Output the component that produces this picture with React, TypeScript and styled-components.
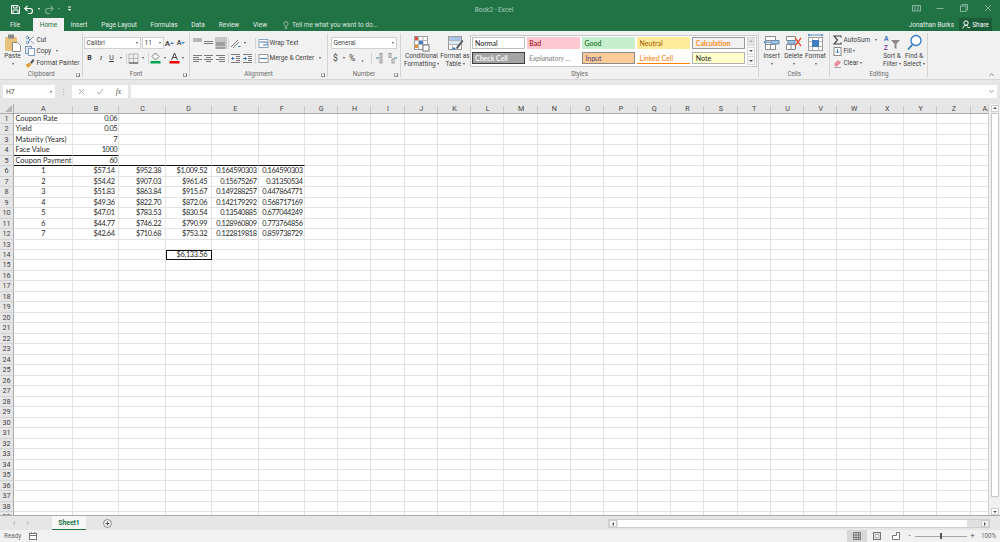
import React, { FC, ReactNode } from 'react'
import styled, { createGlobalStyle } from 'styled-components'
import { ChevronDown, ChevronUp, Lightbulb, Scissors } from 'lucide-react'

const GREEN = '#217346'
const UI_FONT = 'Roboto, "Open Sans", sans-serif'

const GlobalStyle = createGlobalStyle`
  html, body { margin: 0; padding: 0; background: #e6e6e6; overflow: hidden; }
  * { box-sizing: border-box; }
`

/* small drawing helpers */
const Ico: FC<{ w?: number; h?: number; children: ReactNode }> = ({ w = 11, h = 11, children }) => (
  <svg width={w} height={h} viewBox={`0 0 ${w} ${h}`} fill='none'>
    {children}
  </svg>
)

const BLUE = '#3f7cc0'
const GR = '#7a7a7a'
const DK = '#444'

const AlignLines: FC<{ kind: 'left' | 'center' | 'right' | 'top' | 'mid' | 'bottom' }> = ({ kind }) => {
  if (kind === 'top' || kind === 'mid' || kind === 'bottom') {
    const y = kind === 'top' ? 1 : kind === 'mid' ? 3.5 : 5
    return (
      <Ico>
        <path d={`M1 ${y}h9M1 ${y + 2}h9`} stroke={GR} />
        <path d={kind === 'bottom' ? 'M1 10h9' : 'M1 0.5h0'} stroke={GR} />
      </Ico>
    )
  }
  const l = kind === 'left' ? [1, 1, 1, 1] : kind === 'center' ? [1, 3, 1, 3] : [1, 4, 1, 4]
  const r = kind === 'left' ? [10, 7, 10, 7] : kind === 'center' ? [10, 8, 10, 8] : [10, 10, 10, 10]
  return (
    <Ico>
      {l.map((x, i) => (
        <path key={i} d={`M${x} ${2.5 + i * 2}H${r[i]}`} stroke={GR} />
      ))}
    </Ico>
  )
}

const IndentIcon: FC<{ flip?: boolean }> = ({ flip }) => (
  <Ico>
    <path d='M1 1.5h9M6 3.5h4M6 5.5h4M6 7.5h4M1 9.5h9' stroke={GR} />
    <path d={flip ? 'M1 5.5h3M3 4l1.5 1.5L3 7' : 'M4.5 5.5h-3M3 4L1.5 5.5 3 7'} stroke={BLUE} />
  </Ico>
)

const BigGridIcon: FC<{ children?: ReactNode }> = ({ children }) => (
  <Ico w={17} h={18}>
    <rect x='1.5' y='2.5' width='13' height='13' fill='#fff' stroke='#9a9a9a' />
    <path d='M1.5 6.5h13M1.5 10.5h13M5.5 2.5v13M10 2.5v13' stroke='#b5b5b5' />
    {children}
  </Ico>
)

/* title bar */
const TitleBar = styled.div`
  height: 18px;
  background: ${GREEN};
  display: flex;
  align-items: center;
  position: relative;
  font-family: ${UI_FONT};
`

const Qat = styled.div`
  display: flex;
  align-items: center;
  padding-left: 9px;
  width: 440px;
`

const QatSlot = styled.span<{ $w: number; $dim?: boolean }>`
  width: ${p => p.$w}px;
  display: inline-flex;
  justify-content: center;
  align-items: center;
  opacity: ${p => (p.$dim ? 0.4 : 1)};
`

const MiniCaret = styled.span<{ $color?: string }>`
  display: inline-block;
  width: 0;
  height: 0;
  border-left: 1.7px solid transparent;
  border-right: 1.7px solid transparent;
  border-top: 2px solid ${p => p.$color || '#555'};
`

const DocTitle = styled.div`
  width: 108px;
  padding-top: 1.5px;
  text-align: center;
  font-size: 6.5px;
  color: #a9cbb8;
`

const WindowButtons = styled.div`
  margin-left: auto;
  display: flex;
  padding-bottom: 2px;
`

const WinBtn = styled.span`
  width: 24px;
  display: flex;
  justify-content: center;
  align-items: center;
  opacity: 0.45;
`

/* tabs */
const TabBar = styled.div`
  height: 13px;
  background: ${GREEN};
  display: flex;
  align-items: stretch;
  font-family: ${UI_FONT};
  font-size: 6.5px;
  color: #e3eee8;
`

const Tab = styled.div<{ $w: number; $active?: boolean }>`
  width: ${p => p.$w}px;
  margin-left: ${p => (p.$active ? 3 : 0)}px;
  display: flex;
  align-items: center;
  justify-content: center;
  background: ${p => (p.$active ? '#f1f1f1' : 'transparent')};
  color: ${p => (p.$active ? GREEN : 'inherit')};
`

const TellMe = styled.div`
  display: flex;
  align-items: center;
  gap: 2px;
  margin-left: 8px;
  color: #d5e5dc;
`

const UserName = styled.div`
  margin-left: auto;
  display: flex;
  align-items: center;
  padding-right: 5px;
`

const ShareButton = styled.div`
  width: 33px;
  margin-right: 8px;
  background: #1a5c38;
  display: flex;
  align-items: center;
  justify-content: center;
  gap: 2px;
  color: #fff;
`

/* ribbon */
const Ribbon = styled.div`
  height: 49px;
  background: #f1f1f1;
  border-bottom: 1px solid #d6d6d6;
  display: flex;
  font-family: ${UI_FONT};
  font-size: 6.5px;
  color: #444;
`

const Group = styled.div<{ $w: number }>`
  width: ${p => p.$w}px;
  display: flex;
  flex-direction: column;
  position: relative;
  &::after {
    content: '';
    position: absolute;
    right: 0;
    top: 2px;
    bottom: 2px;
    width: 1px;
    background: #d4d4d4;
  }
`

const GroupBody = styled.div<{ $pl?: number }>`
  flex: 1;
  display: flex;
  padding-left: ${p => p.$pl ?? 0}px;
  min-height: 0;
`

const GroupColumn = styled.div`
  display: flex;
  flex-direction: column;
`

const GroupLabel = styled.div`
  height: 9px;
  text-align: center;
  font-size: 6.3px;
  line-height: 9px;
  color: #6a6a6a;
`

const Launcher = styled.span`
  position: absolute;
  right: 3px;
  bottom: 2.5px;
  width: 4px;
  height: 4px;
  border-left: 1px solid #9a9a9a;
  border-bottom: 1px solid #9a9a9a;
  border-top: 1px solid #ccc;
  border-right: 1px solid #777;
`

const BigButton = styled.div<{ $w: number }>`
  width: ${p => p.$w}px;
  display: flex;
  flex-direction: column;
  align-items: center;
  padding-top: 3px;
  line-height: 8px;
  white-space: nowrap;
`

const BigIcon = styled.div`
  height: 18px;
  display: flex;
  justify-content: center;
`

const BigCaretLine = styled.div`
  height: 8px;
  display: flex;
  align-items: center;
  gap: 1.5px;
`

const SmallStack = styled.div<{ $w: number }>`
  width: ${p => p.$w}px;
  display: flex;
  flex-direction: column;
  padding-top: 3px;
`

const SmallItem = styled.div`
  height: 11.5px;
  display: flex;
  align-items: center;
  gap: 1.5px;
  white-space: nowrap;
`

const ToolRow = styled.div<{ $top: number; $h?: number }>`
  display: flex;
  align-items: center;
  margin-top: ${p => p.$top}px;
  height: ${p => p.$h ?? 12}px;
`

const Slot = styled.span<{ $w: number; $active?: boolean }>`
  width: ${p => p.$w}px;
  height: 100%;
  display: inline-flex;
  align-items: center;
  justify-content: center;
  flex: none;
  background: ${p => (p.$active ? '#c6c6c6' : 'transparent')};
  font-size: 8.5px;
  color: #444;
`

const Glyph = styled.span<{ $weight?: number; $italic?: boolean; $under?: boolean; $serif?: boolean; $size?: number }>`
  font-family: ${p => (p.$serif ? '"Liberation Serif", serif' : UI_FONT)};
  font-weight: ${p => p.$weight ?? 400};
  font-style: ${p => (p.$italic ? 'italic' : 'normal')};
  text-decoration: ${p => (p.$under ? 'underline' : 'none')};
  font-size: ${p => p.$size ?? 7}px;
  color: #333;
`

const VSep = styled.span<{ $ml?: number; $mr?: number; $h?: number }>`
  width: 1px;
  height: ${p => p.$h ?? 11}px;
  margin: 0 ${p => p.$mr ?? 1}px 0 ${p => p.$ml ?? 1}px;
  background: #d4d4d4;
  flex: none;
`

const SelectBox = styled.div<{ $w: number; $ml?: number }>`
  width: ${p => p.$w}px;
  height: 12px;
  margin-left: ${p => p.$ml ?? 0}px;
  background: #fff;
  border: 1px solid #d0d0d0;
  display: flex;
  align-items: center;
  justify-content: space-between;
  padding: 0 2px 0 2px;
  font-size: 6.5px;
  flex: none;
`

const WrapLabel = styled.span`
  white-space: nowrap;
  margin-left: 1px;
`

/* styles gallery */
const Gallery = styled.div`
  width: 287px;
  height: 32px;
  margin-top: 4px;
  background: #fff;
  border: 1px solid #c8c8c8;
  display: flex;
  padding: 1px;
`

const StyleGrid = styled.div`
  display: grid;
  grid-template-columns: 53px 53px 53px 53px 53px;
  grid-template-rows: 12px 12px;
  column-gap: 2.2px;
  row-gap: 3px;
`

type Swatch = 'normal' | 'bad' | 'good' | 'neutral' | 'calc' | 'check' | 'expl' | 'input' | 'linked' | 'note'

const swatch: Record<Swatch, string> = {
  normal: 'background:#fff;color:#111;border:1px solid #bdbdbd;',
  bad: 'background:#ffc7ce;color:#9c0006;',
  good: 'background:#c6efce;color:#006100;',
  neutral: 'background:#ffeb9c;color:#9c5700;',
  calc: 'background:#f2f2f2;color:#fa7d00;border:1px solid #9a9a9a;font-weight:600;',
  check: 'background:#a5a5a5;color:#fff;border:1.5px solid #3f3f3f;font-weight:600;',
  expl: 'background:#fff;color:#7f7f7f;font-style:italic;',
  input: 'background:#ffcc99;color:#3f3f76;border:1px solid #8a8a8a;',
  linked: 'background:#fff;color:#fa7d00;border-bottom:1.5px solid #ff8001;',
  note: 'background:#ffffcc;color:#222;border:1px solid #b2b2b2;',
}

const StyleCell = styled.div<{ $kind: Swatch }>`
  font-family: Lato, sans-serif;
  font-size: 7px;
  line-height: 10px;
  padding-left: 2.5px;
  display: flex;
  align-items: center;
  white-space: nowrap;
  overflow: hidden;
  ${p => swatch[p.$kind]}
`

const GalleryScroll = styled.div`
  width: 9px;
  margin-left: 2px;
  display: flex;
  flex-direction: column;
  gap: 1px;
`

const GalleryArrow = styled.div<{ $bg: string }>`
  flex: 1;
  background: ${p => p.$bg};
  border: 1px solid #d8d8d8;
  display: flex;
  align-items: center;
  justify-content: center;
`

const CollapseCell = styled.div`
  flex: 1;
  display: flex;
  align-items: flex-end;
  justify-content: flex-end;
  padding: 0 5px 1px 0;
`

/* formula bar */
const FormulaStrip = styled.div`
  height: 23.5px;
  background: #e6e6e6;
  padding: 5px 3px 5.5px 3px;
  display: flex;
  font-family: ${UI_FONT};
`

const NameBox = styled.div`
  width: 52px;
  background: #fff;
  display: flex;
  align-items: center;
  justify-content: space-between;
  padding: 0 3px;
  font-size: 6.8px;
  color: #444;
`

const Grip = styled.div`
  width: 17px;
  display: flex;
  align-items: center;
  justify-content: center;
  color: #9a9a9a;
  font-size: 7px;
`

const FxBox = styled.div`
  width: 56px;
  background: #fff;
  display: flex;
  align-items: center;
  font-family: 'Liberation Serif', serif;
  font-style: italic;
  font-size: 7.5px;
  color: #555;
`

const FxSlot = styled.span`
  width: 18.6px;
  display: flex;
  justify-content: center;
  align-items: center;
`

const FormulaInput = styled.div`
  flex: 1;
  margin-left: 3px;
  background: #fff;
  display: flex;
  align-items: center;
  justify-content: flex-end;
  padding-right: 2px;
`

/* sheet */
const SheetArea = styled.div`
  height: 412.5px;
  display: flex;
  background: #fff;
  border-bottom: 1px solid #ababab;
`

const GridClip = styled.div`
  width: 988px;
  overflow: hidden;
`

const GridTable = styled.div`
  display: grid;
  grid-template-columns: 14px 58.7px 46.6px 46.4px 46px 47px 46px repeat(21, 33.3px);
  grid-template-rows: 10.2px;
  grid-auto-rows: 10.49px;
  font-family: Lato, 'Liberation Sans', sans-serif;
  width: 1010px;
`

const ColHead = styled.div`
  background: #e6e6e6;
  border-bottom: 1px solid #ababab;
  font-size: 7.2px;
  line-height: 9.5px;
  text-align: center;
  color: #444;
  position: relative;
  font-family: ${UI_FONT};
  &::after {
    content: '';
    position: absolute;
    right: 0;
    top: 2px;
    bottom: 0;
    width: 1px;
    background: #c8c8c8;
  }
`

const Corner = styled.div`
  background: #e6e6e6;
  border-bottom: 1px solid #ababab;
  border-right: 1px solid #ababab;
  position: relative;
  &::after {
    content: '';
    position: absolute;
    right: 1px;
    bottom: 1px;
    width: 0;
    height: 0;
    border-left: 7px solid transparent;
    border-bottom: 7px solid #b5b5b5;
  }
`

const RowHead = styled.div`
  background: #e6e6e6;
  border-bottom: 1px solid #d2d2d2;
  border-right: 1px solid #ababab;
  font-size: 7.2px;
  line-height: 10px;
  text-align: center;
  color: #444;
  font-family: ${UI_FONT};
`

const Cell = styled.div<{ $align?: string; $rule?: boolean; $picked?: boolean; $money?: boolean }>`
  border-right: 1px solid #e4e4e4;
  border-bottom: ${p => (p.$rule ? '1.3px solid #111' : '1px solid #e4e4e4')};
  font-size: 7.4px;
  line-height: 10px;
  padding: 0 ${p => (p.$money ? 3.5 : 1)}px 0 1.5px;
  text-align: ${p => p.$align || 'left'};
  letter-spacing: ${p => (p.$align === 'left' ? 0 : p.$money ? '-0.32px' : '-0.38px')};
  color: #2a2a2a;
  white-space: nowrap;
  overflow: ${p => (p.$align === 'left' ? 'visible' : 'hidden')};
  ${p => (p.$picked ? 'outline: 1.2px solid #111; outline-offset: -1px;' : '')}
`

const VScroll = styled.div`
  width: 12px;
  background: #f0f0f0;
  border-left: 1px solid #d0d0d0;
  display: flex;
  flex-direction: column;
  align-items: center;
  padding: 1px 1px 0 1px;
  gap: 1px;
`

const ScrollArrow = styled.div`
  width: 8px;
  height: 7px;
  background: #fff;
  border: 1px solid #d0d0d0;
  display: flex;
  align-items: center;
  justify-content: center;
  flex: none;
`

const VThumb = styled.div`
  width: 8px;
  height: 384px;
  background: #fff;
  border: 1px solid #c8c8c8;
  flex: none;
`

const VTrack = styled.div`
  flex: 1;
`

const UpTri = styled.span<{ $dir: 'up' | 'down' | 'left' | 'right'; $color?: string }>`
  width: 0;
  height: 0;
  ${p => {
    const c = p.$color || '#555'
    if (p.$dir === 'up') return `border-left:2px solid transparent;border-right:2px solid transparent;border-bottom:2.5px solid ${c};`
    if (p.$dir === 'down') return `border-left:2px solid transparent;border-right:2px solid transparent;border-top:2.5px solid ${c};`
    if (p.$dir === 'left') return `border-top:2px solid transparent;border-bottom:2px solid transparent;border-right:2.5px solid ${c};`
    return `border-top:2px solid transparent;border-bottom:2px solid transparent;border-left:2.5px solid ${c};`
  }}
`

/* sheet tabs */
const SheetBar = styled.div`
  height: 14px;
  background: #e6e6e6;
  display: flex;
  align-items: stretch;
  font-family: ${UI_FONT};
`

const NavArrows = styled.div`
  width: 52px;
  display: flex;
  align-items: center;
  padding-left: 13px;
  gap: 12px;
`

const SheetTab = styled.div`
  width: 34px;
  background: #f7f7f7;
  border-bottom: 1.5px solid ${GREEN};
  color: ${GREEN};
  font-weight: 700;
  font-size: 6.8px;
  display: flex;
  align-items: center;
  justify-content: center;
`

const AddSheet = styled.div`
  width: 42px;
  display: flex;
  align-items: center;
  justify-content: center;
`

const HScroll = styled.div`
  margin-left: 480px;
  width: 382px;
  height: 9px;
  margin-top: 3px;
  display: flex;
  align-items: center;
  gap: 1px;
  background: #e0e0e0;
  border: 1px solid #cfcfcf;
`

const HArrow = styled.div`
  width: 8px;
  height: 100%;
  background: #f6f6f6;
  border: 1px solid #cfcfcf;
  display: flex;
  align-items: center;
  justify-content: center;
  flex: none;
`

const HThumb = styled.div`
  width: 349px;
  height: 100%;
  background: #fff;
  flex: none;
`

const HTrack = styled.div`
  flex: 1;
`

/* status bar */
const StatusBar = styled.div`
  height: 12px;
  background: #f1f1f1;
  display: flex;
  align-items: stretch;
  font-family: ${UI_FONT};
  font-size: 6.3px;
  color: #666;
`

const ReadyText = styled.div`
  width: 28px;
  padding-left: 4px;
  display: flex;
  align-items: center;
`

const MacroSlot = styled.div`
  width: 10px;
  display: flex;
  align-items: center;
  justify-content: center;
`

const StatusRight = styled.div`
  margin-left: auto;
  display: flex;
  align-items: center;
`

const ViewBtn = styled.div<{ $on?: boolean; $w: number }>`
  width: ${p => p.$w}px;
  height: 100%;
  display: flex;
  align-items: center;
  justify-content: center;
  background: ${p => (p.$on ? '#d8d8d8' : 'transparent')};
`

const ZoomTrack = styled.div`
  width: 52px;
  height: 1px;
  margin: 0 1px;
  background: #a5a5a5;
  display: flex;
  align-items: center;
  justify-content: center;
`

const ZoomThumb = styled.span`
  width: 2px;
  height: 6px;
  background: #555;
`

const ZoomSign = styled.span`
  width: 9px;
  text-align: center;
  font-size: 8px;
  line-height: 8px;
  color: #555;
`

const ZoomValue = styled.span`
  width: 23px;
  text-align: center;
`

/* content */
const colLabels = ['A', 'B', 'C', 'D', 'E', 'F', 'G', 'H', 'I', 'J', 'K', 'L', 'M', 'N', 'O', 'P', 'Q', 'R', 'S', 'T', 'U', 'V', 'W', 'X', 'Y', 'Z', 'AA']

const sheetData: Record<number, string[]> = {
  1: ['Coupon Rate', '0.06'],
  2: ['Yield', '0.05'],
  3: ['Maturity (Years)', '7'],
  4: ['Face Value', '1000'],
  5: ['Coupon Payment', '60'],
  6: ['1', '$57.14', '$952.38', '$1,009.52', '0.164590303', '0.164590303'],
  7: ['2', '$54.42', '$907.03', '$961.45', '0.15675267', '0.31350534'],
  8: ['3', '$51.83', '$863.84', '$915.67', '0.149288257', '0.447864771'],
  9: ['4', '$49.36', '$822.70', '$872.06', '0.142179292', '0.568717169'],
  10: ['5', '$47.01', '$783.53', '$830.54', '0.13540885', '0.677044249'],
  11: ['6', '$44.77', '$746.22', '$790.99', '0.128960809', '0.773764856'],
  12: ['7', '$42.64', '$710.68', '$753.32', '0.122819818', '0.859738729'],
  14: ['', '', '', '$6,133.56'],
}

const cellAlign = (row: number, col: number) => {
  if (col > 0) return 'right'
  return row >= 6 && row <= 12 ? 'center' : 'left'
}

const hasRule = (row: number, col: number) => (row === 4 && col < 2) || (row === 5 && col < 6)

const Big: FC<{ icon: ReactNode; lines: string[]; w: number; caret?: boolean }> = ({ icon, lines, w, caret = true }) => (
  <BigButton $w={w}>
    <BigIcon>{icon}</BigIcon>
    {lines.slice(0, -1).map(l => (
      <span key={l}>{l}</span>
    ))}
    {lines.length > 1 ? (
      <BigCaretLine>
        {lines[lines.length - 1]}
        {caret && <MiniCaret />}
      </BigCaretLine>
    ) : (
      <>
        <span>{lines[0]}</span>
        <BigCaretLine>{caret && <MiniCaret />}</BigCaretLine>
      </>
    )}
  </BigButton>
)

const App: FC = () => {
  const rows = Array.from({ length: 39 }, (_, i) => i + 1)

  return (
    <>
      <GlobalStyle />
      <TitleBar>
        <Qat>
          <QatSlot $w={12}>
            <Ico>
              <path d='M1.5 1.5h6.5l1.5 1.5v6.5h-8z' stroke='#fff' />
              <path d='M3.5 1.5v2.5h3.5v-2.5M3 9.5v-3.5h5v3.5' stroke='#fff' />
            </Ico>
          </QatSlot>
          <QatSlot $w={15}>
            <Ico>
              <path d='M2.5 4.5h4.5a2.5 2.5 0 0 1 0 5H5' stroke='#fff' strokeWidth='1.2' />
              <path d='M4.5 1.8L1.8 4.5l2.7 2.7' stroke='#fff' strokeWidth='1.2' />
            </Ico>
          </QatSlot>
          <QatSlot $w={6}>
            <MiniCaret $color='#fff' />
          </QatSlot>
          <QatSlot $w={14} $dim>
            <Ico>
              <path d='M8.5 4.5H4a2.5 2.5 0 0 0 0 5h2' stroke='#fff' strokeWidth='1.2' />
              <path d='M6.5 1.8l2.7 2.7-2.7 2.7' stroke='#fff' strokeWidth='1.2' />
            </Ico>
          </QatSlot>
          <QatSlot $w={6} $dim>
            <MiniCaret $color='#fff' />
          </QatSlot>
          <QatSlot $w={14}>
            <Ico w={5} h={6}>
              <path d='M1 1h3' stroke='#fff' />
              <path d='M0.8 3h3.4L2.5 5z' fill='#fff' />
            </Ico>
          </QatSlot>
        </Qat>
        <DocTitle>Book2 - Excel</DocTitle>
        <WindowButtons>
          <WinBtn>
            <Ico w={9} h={8}>
              <rect x='0.5' y='1.5' width='8' height='5.5' stroke='#fff' />
              <path d='M3 1.5v5.5M6 1.5v5.5' stroke='#fff' />
            </Ico>
          </WinBtn>
          <WinBtn>
            <Ico w={8} h={8}>
              <path d='M0.5 4.5h7' stroke='#fff' />
            </Ico>
          </WinBtn>
          <WinBtn>
            <Ico w={8} h={8}>
              <rect x='0.5' y='2' width='5.5' height='5.5' stroke='#fff' />
              <path d='M2 2V0.5h5.5V6H6' stroke='#fff' />
            </Ico>
          </WinBtn>
          <WinBtn>
            <Ico w={8} h={8}>
              <path d='M1 1l6 6M7 1L1 7' stroke='#fff' />
            </Ico>
          </WinBtn>
        </WindowButtons>
      </TitleBar>

      <TabBar>
        <Tab $w={30}>File</Tab>
        <Tab $w={31} $active>
          Home
        </Tab>
        <Tab $w={30}>Insert</Tab>
        <Tab $w={50}>Page Layout</Tab>
        <Tab $w={40}>Formulas</Tab>
        <Tab $w={28}>Data</Tab>
        <Tab $w={34}>Review</Tab>
        <Tab $w={28}>View</Tab>
        <TellMe>
          <Lightbulb size={8} color='#fff' strokeWidth={1.5} />
          Tell me what you want to do...
        </TellMe>
        <UserName>Jonathan Burks</UserName>
        <ShareButton>
          <Ico w={8} h={9}>
            <circle cx='4' cy='3' r='2.2' stroke='#fff' />
            <path d='M0.8 8.5c.3-2 1.5-3 3.2-3 .8 0 1.500.2 2 .7M5.500 7.500h2.500' stroke='#fff' />
          </Ico>
          Share
        </ShareButton>
      </TabBar>

      <Ribbon>
        <Group $w={82.5}>
          <GroupBody>
            <Big
              w={25}
              lines={['Paste']}
              icon={
                <Ico w={18} h={18}>
                  <rect x='1' y='3' width='12' height='14' rx='1' fill='#e7c27d' />
                  <rect x='4' y='0.5' width='6' height='4' fill='#8a8a8a' />
                  <path d='M8.500 8.500h5l3 3v6h-8z' fill='#fff' stroke='#8a8a8a' />
                </Ico>
              }
            />
            <SmallStack $w={56}>
              <SmallItem>
                <Scissors size={10} color='#3c6da3' strokeWidth={1.6} />
                Cut
              </SmallItem>
              <SmallItem>
                <Ico w={10} h={10}>
                  <rect x='0.5' y='0.5' width='6' height='7' fill='#dfe8f2' stroke='#7f9dbb' />
                  <rect x='3.500' y='2.500' width='6' height='7' fill='#fff' stroke='#7f9dbb' />
                </Ico>
                Copy&nbsp;&nbsp;
                <MiniCaret />
              </SmallItem>
              <SmallItem>
                <Ico w={10} h={10}>
                  <path d='M0.500 7l4-2.500 2 2.500-3.500 3z' fill='#e2a23c' />
                  <path d='M5 4.500l3-3.500 1.500 1.200-2.700 3.800z' fill='#555' />
                </Ico>
                Format Painter
              </SmallItem>
            </SmallStack>
          </GroupBody>
          <GroupLabel>Clipboard</GroupLabel>
          <Launcher />
        </Group>

        <Group $w={107}>
          <GroupBody $pl={1}>
            <GroupColumn>
              <ToolRow $top={6}>
                <SelectBox $w={57}>
                  Calibri
                  <MiniCaret />
                </SelectBox>
                <SelectBox $w={22} $ml={1}>
                  11
                  <MiniCaret />
                </SelectBox>
                <Slot $w={12}>
                  <Glyph $weight={500} $size={8}>
                    A
                  </Glyph>
                  <UpTri $dir='up' $color={BLUE} />
                </Slot>
                <Slot $w={11}>
                  <Glyph $weight={500}>A</Glyph>
                  <UpTri $dir='down' $color={BLUE} />
                </Slot>
              </ToolRow>
              <ToolRow $top={3}>
                <Slot $w={12}>
                  <Glyph $weight={700}>B</Glyph>
                </Slot>
                <Slot $w={11}>
                  <Glyph $italic $serif>
                    I
                  </Glyph>
                </Slot>
                <Slot $w={10}>
                  <Glyph $under>U</Glyph>
                </Slot>
                <Slot $w={8}>
                  <MiniCaret />
                </Slot>
                <VSep />
                <Slot $w={11}>
                  <Ico>
                    <rect x='1' y='1' width='9' height='9' stroke='#b5b5b5' />
                    <path d='M5.500 1v9M1 5.500h9' stroke='#b5b5b5' />
                    <path d='M1 10h9' stroke={DK} />
                  </Ico>
                </Slot>
                <Slot $w={8}>
                  <MiniCaret />
                </Slot>
                <VSep />
                <Slot $w={12}>
                  <Ico w={11} h={12}>
                    <path d='M5.500 1l3.500 3.500-3.500 3.500L2 4.500z' fill='#fff' stroke={GR} />
                    <rect x='0.500' y='9' width='10' height='2.500' fill='#00a651' />
                  </Ico>
                </Slot>
                <Slot $w={7}>
                  <MiniCaret />
                </Slot>
                <Slot $w={11}>
                  <Ico w={11} h={12}>
                    <path d='M2.500 8l3-7 3 7M3.700 5.500h3.600' stroke={DK} />
                    <rect x='0.500' y='9' width='10' height='2.500' fill='#f00000' />
                  </Ico>
                </Slot>
                <Slot $w={7}>
                  <MiniCaret />
                </Slot>
              </ToolRow>
            </GroupColumn>
          </GroupBody>
          <GroupLabel>Font</GroupLabel>
          <Launcher />
        </Group>

        <Group $w={138}>
          <GroupBody $pl={2}>
            <GroupColumn>
              <ToolRow $top={6}>
                <Slot $w={11.500}>
                  <AlignLines kind='top' />
                </Slot>
                <Slot $w={11.500}>
                  <AlignLines kind='mid' />
                </Slot>
                <Slot $w={12} $active>
                  <AlignLines kind='bottom' />
                </Slot>
                <VSep />
                <Slot $w={12}>
                  <Ico>
                    <path d='M1 9l7-7M3 10l6-6' stroke={GR} />
                    <path d='M8 8.500h2.500' stroke={BLUE} />
                  </Ico>
                </Slot>
                <Slot $w={6}>
                  <MiniCaret />
                </Slot>
                <VSep $ml={7} $mr={2} />
                <Ico>
                  <rect x='1' y='1.500' width='9' height='8' stroke='#8aa5c0' fill='#fff' />
                  <path d='M2 4h6a1.500 1.500 0 0 1 0 3H5' stroke={BLUE} />
                </Ico>
                <WrapLabel>Wrap Text</WrapLabel>
              </ToolRow>
              <ToolRow $top={3}>
                <Slot $w={11.500}>
                  <AlignLines kind='left' />
                </Slot>
                <Slot $w={11.500}>
                  <AlignLines kind='center' />
                </Slot>
                <Slot $w={12}>
                  <AlignLines kind='right' />
                </Slot>
                <VSep />
                <Slot $w={12}>
                  <IndentIcon />
                </Slot>
                <Slot $w={11}>
                  <IndentIcon flip />
                </Slot>
                <VSep $ml={2} $mr={2} />
                <Ico>
                  <rect x='1' y='1.500' width='9' height='8' stroke='#9a9a9a' fill='#fff' />
                  <path d='M2 5.500h7' stroke={BLUE} />
                </Ico>
                <WrapLabel>Merge &amp; Center&nbsp;&nbsp;&nbsp;</WrapLabel>
                <MiniCaret />
              </ToolRow>
            </GroupColumn>
          </GroupBody>
          <GroupLabel>Alignment</GroupLabel>
          <Launcher />
        </Group>

        <Group $w={73}>
          <GroupBody $pl={3}>
            <GroupColumn>
              <ToolRow $top={6}>
                <SelectBox $w={66}>
                  General
                  <MiniCaret />
                </SelectBox>
              </ToolRow>
              <ToolRow $top={3}>
                <Slot $w={10}>$</Slot>
                <Slot $w={6}>
                  <MiniCaret />
                </Slot>
                <Slot $w={11}>%</Slot>
                <Slot $w={10}>,</Slot>
                <VSep $ml={3} $mr={3} />
                <Slot $w={12}>
                  <Ico>
                    <path d='M1 5h3' stroke={BLUE} />
                    <rect x='5' y='0.500' width='2' height='4' stroke={GR} strokeWidth='0.7' />
                    <rect x='5' y='6' width='2' height='4' stroke={GR} strokeWidth='0.7' />
                  </Ico>
                </Slot>
                <Slot $w={12}>
                  <Ico>
                    <path d='M7 5h3' stroke={BLUE} />
                    <rect x='2' y='0.500' width='2' height='4' stroke={GR} strokeWidth='0.7' />
                    <rect x='5' y='6' width='2' height='4' stroke={GR} strokeWidth='0.7' />
                  </Ico>
                </Slot>
              </ToolRow>
            </GroupColumn>
          </GroupBody>
          <GroupLabel>Number</GroupLabel>
          <Launcher />
        </Group>

        <Group $w={358}>
          <GroupBody $pl={2}>
            <Big
              w={38}
              lines={['Conditional', 'Formatting']}
              icon={
                <BigGridIcon>
                  <rect x='2' y='3' width='3' height='3' fill='#e5533d' />
                  <rect x='6' y='7' width='4' height='3' fill={BLUE} />
                  <rect x='2' y='11' width='3' height='3' fill='#e8923c' />
                  <rect x='10' y='11' width='6' height='6' fill='#fff' stroke='#777' />
                </BigGridIcon>
              }
            />
            <Big
              w={29}
              lines={['Format as', 'Table']}
              icon={
                <BigGridIcon>
                  <rect x='2' y='3' width='12' height='3' fill='#a9c5e6' />
                  <rect x='2' y='7' width='12' height='3' fill='#dce8f5' />
                  <path d='M9 14l6-8 1.500 1-6 8z' fill='#555' />
                  <path d='M4 16l3-3 2 2z' fill={BLUE} />
                </BigGridIcon>
              }
            />
            <Gallery>
              <StyleGrid>
                <StyleCell $kind='normal'>Normal</StyleCell>
                <StyleCell $kind='bad'>Bad</StyleCell>
                <StyleCell $kind='good'>Good</StyleCell>
                <StyleCell $kind='neutral'>Neutral</StyleCell>
                <StyleCell $kind='calc'>Calculation</StyleCell>
                <StyleCell $kind='check'>Check Cell</StyleCell>
                <StyleCell $kind='expl'>Explanatory ...</StyleCell>
                <StyleCell $kind='input'>Input</StyleCell>
                <StyleCell $kind='linked'>Linked Cell</StyleCell>
                <StyleCell $kind='note'>Note</StyleCell>
              </StyleGrid>
              <GalleryScroll>
                <GalleryArrow $bg='#e4e4e4'>
                  <UpTri $dir='up' $color='#aaa' />
                </GalleryArrow>
                <GalleryArrow $bg='#fff'>
                  <UpTri $dir='down' />
                </GalleryArrow>
                <GalleryArrow $bg='#f4f4f4'>
                  <UpTri $dir='down' />
                </GalleryArrow>
              </GalleryScroll>
            </Gallery>
          </GroupBody>
          <GroupLabel>Styles</GroupLabel>
        </Group>

        <Group $w={71.500}>
          <GroupBody $pl={2}>
            <Big
              w={22}
              lines={['Insert']}
              icon={
                <Ico w={17} h={18}>
                  <path d='M2.500 2.500h10v4h-10zM2.500 10.500h10v5h-10zM7.500 10.500v5' stroke='#8a8a8a' fill='#fff' />
                  <rect x='8' y='6.500' width='8' height='3.500' fill='#9ec3ea' stroke='#6a8db0' />
                  <path d='M7 8.200H1M3 6.500L1 8.200 3 10' stroke={BLUE} />
                </Ico>
              }
            />
            <Big
              w={22}
              lines={['Delete']}
              icon={
                <Ico w={17} h={18}>
                  <path d='M1.500 2.500h9v4h-9zM1.500 10.500h9v5h-9zM6 10.500v5' stroke='#8a8a8a' fill='#fff' />
                  <rect x='3' y='6.500' width='7' height='3.500' fill='#9ec3ea' stroke='#6a8db0' />
                  <path d='M10 4l6 8M16 4l-6 8' stroke='#e2533d' strokeWidth='1.300' />
                </Ico>
              }
            />
            <Big
              w={22}
              lines={['Format']}
              icon={
                <Ico w={17} h={18}>
                  <rect x='1.500' y='3.500' width='14' height='13' fill='#fff' stroke='#9a9a9a' />
                  <path d='M1.500 7.500h14M1.500 12.500h14M5.500 3.500v13M11.500 3.500v13' stroke='#b5b5b5' />
                  <rect x='5' y='6' width='7' height='7' fill={BLUE} />
                  <path d='M1 1h15M3 0l-2 1 2 1M14 0l2 1-2 1' stroke={BLUE} strokeWidth='0.800' />
                </Ico>
              }
            />
          </GroupBody>
          <GroupLabel>Cells</GroupLabel>
        </Group>

        <Group $w={98}>
          <GroupBody $pl={3}>
            <SmallStack $w={48}>
              <SmallItem>
                <Ico w={9} h={10}>
                  <path d='M8 2.500V1H1l3.500 4L1 9h7V7.500' stroke={DK} strokeWidth='1.200' />
                </Ico>
                AutoSum&nbsp;&nbsp;
                <MiniCaret />
              </SmallItem>
              <SmallItem>
                <Ico w={9} h={10}>
                  <rect x='1' y='1.500' width='7' height='8' fill='#fff' stroke='#8a8a8a' />
                  <path d='M4.500 3v4M3 5.500l1.500 1.500L6 5.500' stroke={BLUE} />
                </Ico>
                Fill
                <MiniCaret />
              </SmallItem>
              <SmallItem>
                <Ico w={9} h={10}>
                  <path d='M1 6l4-4 3 2.500-4 4H2.500z' fill='#e88a9e' />
                  <path d='M1 9.500h7' stroke='#aaa' />
                </Ico>
                Clear
                <MiniCaret />
              </SmallItem>
            </SmallStack>
            <Big
              w={22}
              lines={['Sort &', 'Filter']}
              icon={
                <Ico w={18} h={18}>
                  <text x='1' y='6.500' fontFamily='Open Sans' fontWeight='700' fontSize='6.500' fill={BLUE}>
                    A
                  </text>
                  <text x='1' y='16' fontFamily='Open Sans' fontWeight='700' fontSize='6.500' fill='#8b4fb5'>
                    Z
                  </text>
                  <path d='M8 6h9l-3.500 4v5l-2-1v-4z' fill='#8a8a8a' />
                </Ico>
              }
            />
            <Big
              w={22}
              lines={['Find &', 'Select']}
              icon={
                <Ico w={17} h={18}>
                  <circle cx='10' cy='6.500' r='5' fill='#fff' stroke='#2f7cc4' strokeWidth='1.300' />
                  <path d='M6.500 10.500L2 15.500' stroke='#2f7cc4' strokeWidth='1.800' />
                </Ico>
              }
            />
          </GroupBody>
          <GroupLabel>Editing</GroupLabel>
        </Group>

        <CollapseCell>
          <ChevronUp size={7} color='#555' strokeWidth={2.5} />
        </CollapseCell>
      </Ribbon>

      <FormulaStrip>
        <NameBox>
          H7
          <MiniCaret />
        </NameBox>
        <Grip>⋮</Grip>
        <FxBox>
          <FxSlot>
            <Ico w={7} h={7}>
              <path d='M1 1l5 5M6 1L1 6' stroke='#aaa' />
            </Ico>
          </FxSlot>
          <FxSlot>
            <Ico w={8} h={7}>
              <path d='M1 4l2 2 4-5' stroke='#aaa' />
            </Ico>
          </FxSlot>
          <FxSlot>fx</FxSlot>
        </FxBox>
        <FormulaInput>
          <ChevronDown size={7} color='#555' strokeWidth={2.5} />
        </FormulaInput>
      </FormulaStrip>

      <SheetArea>
        <GridClip>
          <GridTable>
            <Corner />
            {colLabels.map(c => (
              <ColHead key={c}>{c}</ColHead>
            ))}
            {rows.map(r => (
              <React.Fragment key={r}>
                <RowHead>{r}</RowHead>
                {colLabels.map((c, i) => {
                  const value = sheetData[r]?.[i] ?? ''
                  return (
                    <Cell
                      key={c}
                      $align={cellAlign(r, i)}
                      $rule={hasRule(r, i)}
                      $picked={r === 14 && i === 3}
                      $money={value.startsWith('$')}
                    >
                      {value}
                    </Cell>
                  )
                })}
              </React.Fragment>
            ))}
          </GridTable>
        </GridClip>
        <VScroll>
          <ScrollArrow>
            <UpTri $dir='up' />
          </ScrollArrow>
          <VThumb />
          <VTrack />
          <ScrollArrow>
            <UpTri $dir='down' />
          </ScrollArrow>
        </VScroll>
      </SheetArea>

      <SheetBar>
        <NavArrows>
          <UpTri $dir='left' $color='#bbb' />
          <UpTri $dir='right' $color='#bbb' />
        </NavArrows>
        <SheetTab>Sheet1</SheetTab>
        <AddSheet>
          <Ico w={9} h={9}>
            <circle cx='4.500' cy='4.500' r='4' fill='#f2f2f2' stroke='#8a8a8a' />
            <path d='M2.500 4.500h4M4.500 2.500v4' stroke='#555' />
          </Ico>
        </AddSheet>
        <HScroll>
          <HArrow>
            <UpTri $dir='left' />
          </HArrow>
          <HThumb />
          <HTrack />
          <HArrow>
            <UpTri $dir='right' />
          </HArrow>
        </HScroll>
      </SheetBar>

      <StatusBar>
        <ReadyText>Ready</ReadyText>
        <MacroSlot>
          <Ico w={8} h={8}>
            <rect x='0.500' y='1.500' width='7' height='6' fill='#fff' stroke='#777' />
            <path d='M0.500 3.500h7M2 0v2M6 0v2' stroke='#777' />
          </Ico>
        </MacroSlot>
        <StatusRight>
          <ViewBtn $w={20} $on>
            <Ico w={8} h={8}>
              <path d='M0.500 0.500h7v7h-7zM3 0.500v7M5.500 0.500v7M0.500 3h7M0.500 5.500h7' stroke='#666' strokeWidth='0.800' />
            </Ico>
          </ViewBtn>
          <ViewBtn $w={20}>
            <Ico w={8} h={8}>
              <rect x='0.500' y='0.500' width='7' height='7' fill='#ddd' stroke='#777' />
              <rect x='2.500' y='2.500' width='3' height='3' fill='#fff' stroke='#888' strokeWidth='0.500' />
            </Ico>
          </ViewBtn>
          <ViewBtn $w={18}>
            <Ico w={8} h={8}>
              <path d='M0.500 3.500h4v-3h3v7h-7z' fill='#fff' stroke='#777' />
            </Ico>
          </ViewBtn>
          <ZoomSign>-</ZoomSign>
          <ZoomTrack>
            <ZoomThumb />
          </ZoomTrack>
          <ZoomSign>+</ZoomSign>
          <ZoomValue>100%</ZoomValue>
        </StatusRight>
      </StatusBar>
    </>
  )
}

export default App
